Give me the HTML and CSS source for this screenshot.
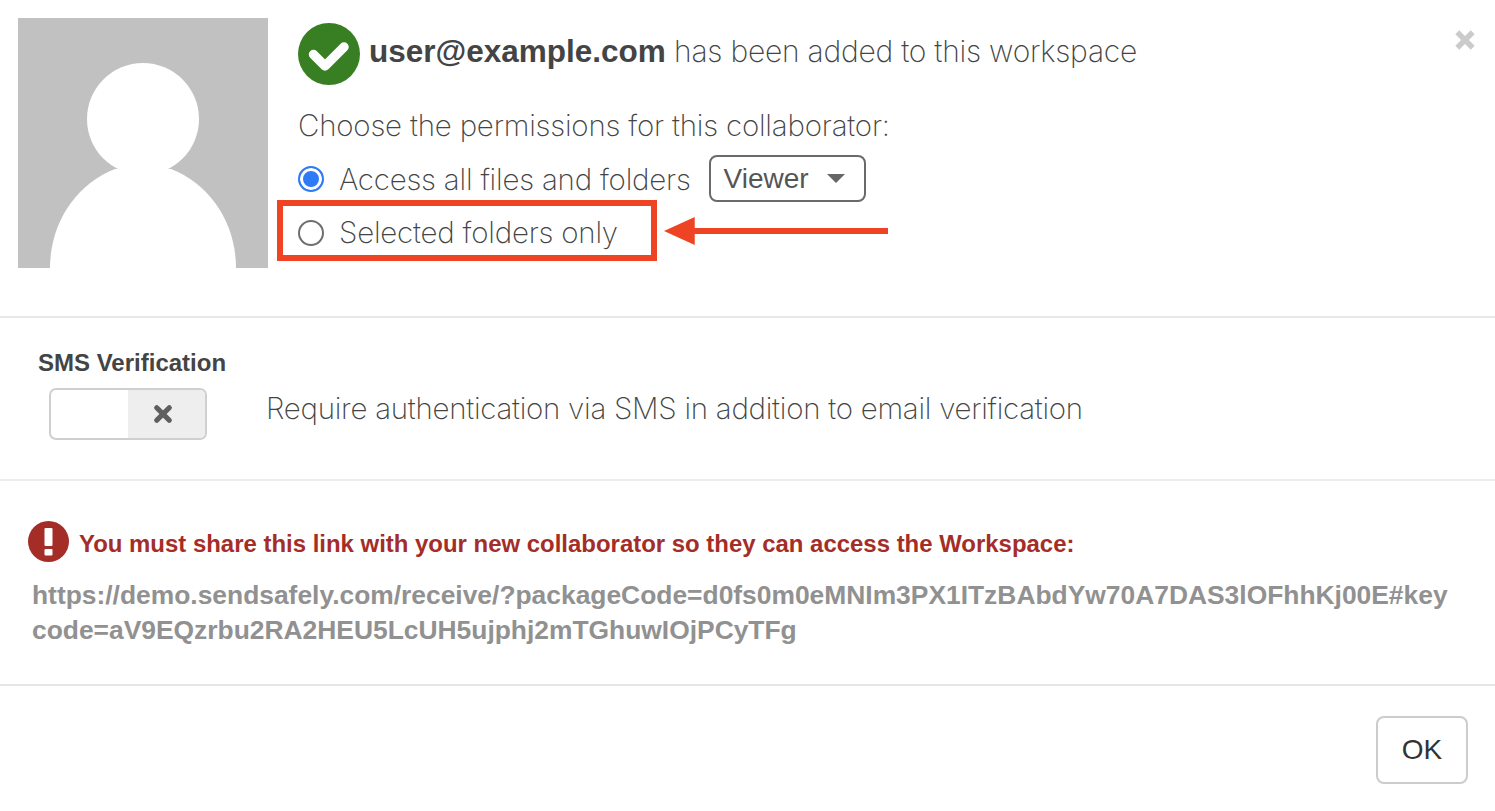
FILE: index.html
```html
<!DOCTYPE html>
<html lang="en">
<head>
<meta charset="utf-8">
<title>Collaborator added</title>
<link rel="stylesheet" href="styles.css">
</head>
<body>
<div class="modal">
  <section class="top">
    <svg class="avatar" viewBox="0 0 250 250" aria-hidden="true">
      <rect width="250" height="250" fill="#c1c1c1"/>
      <circle cx="125" cy="101" r="56" fill="#fff"/>
      <path d="M32 250C32 205 58 166 97 151H153C192 166 218 205 218 250Z" fill="#fff"/>
    </svg>
    <div class="info">
      <div class="headline">
        <svg class="check" viewBox="0 0 62 62" aria-hidden="true">
          <circle cx="31" cy="31" r="31" fill="#387e23"/>
          <path d="M15.500 31.500L27 43L46 24" fill="none" stroke="#fff" stroke-width="9.500" stroke-linecap="round" stroke-linejoin="round"/>
        </svg>
        <span class="headtext"><b>user@example.com</b> has been added to this workspace</span>
      </div>
      <p class="choose">Choose the permissions for this collaborator:</p>
      <div class="opt opt-all">
        <span class="radio on"></span>
        <span class="opt-label">Access all files and folders</span>
        <span class="select"><span class="select-label">Viewer</span><i class="caret"></i></span>
      </div>
      <div class="opt-line">
        <div class="opt highlighted">
          <span class="radio"></span>
          <span class="opt-label">Selected folders only</span>
        </div>
        <svg class="arrow" viewBox="0 0 226 30" aria-hidden="true">
          <path d="M0 15L31 1V12H226V18H31V29Z" fill="#ef4423"/>
        </svg>
      </div>
    </div>
    <svg class="close" viewBox="0 0 20 20" aria-hidden="true">
      <path d="M3 3L17 17M17 3L3 17" stroke="#cbcbcb" stroke-width="5"/>
    </svg>
  </section>
  <section class="sms">
    <div class="sms-left">
      <div class="sms-title">SMS Verification</div>
      <div class="toggle"><span class="toggle-off"></span><span class="toggle-x">
        <svg viewBox="0 0 16 16" aria-hidden="true"><path d="M3 3L13 13M13 3L3 13" stroke="#5f5f5f" stroke-width="4.200" stroke-linecap="round"/></svg>
      </span></div>
    </div>
    <div class="sms-text">Require authentication via SMS in addition to email verification</div>
  </section>
  <section class="link">
    <div class="warn">
      <svg class="warn-icon" viewBox="0 0 41 41" aria-hidden="true">
        <circle cx="20.500" cy="20.500" r="20.500" fill="#a52d27"/>
        <rect x="16.500" y="7" width="8" height="18" rx="1" fill="#fff"/>
        <rect x="16.500" y="28" width="8" height="6.500" rx="1" fill="#fff"/>
      </svg>
      <span class="warn-text">You must share this link with your new collaborator so they can access the Workspace:</span>
    </div>
    <div class="url">https://demo.sendsafely.com/receive/?packageCode=d0fs0m0eMNIm3PX1ITzBAbdYw70A7DAS3lOFhhKj00E#key<br>code=aV9EQzrbu2RA2HEU5LcUH5ujphj2mTGhuwIOjPCyTFg</div>
  </section>
  <footer class="foot">
    <button class="ok" type="button">OK</button>
  </footer>
</div>
</body>
</html>
```
FILE: styles.css
```css
* { box-sizing: border-box; }
html, body { margin: 0; padding: 0; background: #fff; }
body { width: 1495px; height: 811px; overflow: hidden; font-family: "Liberation Sans", Arial, sans-serif; color: #444; }
.modal { display: flex; flex-direction: column; height: 811px; }
.top { height: 318px; border-bottom: 2px solid #e8e8e8; display: flex; padding: 18px 0 0 18px; position: relative; }
.avatar { width: 250px; height: 250px; flex: none; }
.info { margin-left: 30px; display: flex; flex-direction: column; }
.headline { display: flex; align-items: flex-start; height: 62px; margin-top: 5px; gap: 9px; }
.check { width: 62px; height: 62px; flex: none; }
.headtext { font-family: Inter, sans-serif; font-weight: 200; font-size: 30px; letter-spacing: -.24px; line-height: 56px; color: #444; white-space: nowrap; }
.headtext b { font-family: "Liberation Sans", sans-serif; font-weight: 700; font-size: 31.5px; letter-spacing: 0; color: #444; }
.choose { font-family: Inter, sans-serif; font-weight: 200; font-size: 29.5px; letter-spacing: -.21px; color: #444; margin: 20px 0 0; line-height: 40px; white-space: nowrap; }
.opt { display: flex; align-items: center; font-family: Inter, sans-serif; font-weight: 200; font-size: 29.5px; letter-spacing: -.22px; color: #444; white-space: nowrap; }
.opt-label { padding-top: 2px; }
.opt-all { height: 48px; margin-top: 9px; }
.radio { width: 26px; height: 26px; border-radius: 50%; border: 2px solid #6e6e6e; margin: 2px 15px 0 0; flex: none; background: #fff; }
.radio.on { border-color: #2e7bf6; background: #2e7bf6; box-shadow: inset 0 0 0 3px #fff; }
.highlighted .radio { margin-top: 4px; }
.select { display: inline-flex; align-items: center; height: 47px; width: 157px; margin-left: 18px; padding-left: 13px; border: 2px solid #6a6a6a; border-radius: 8px; font-family: "Liberation Sans", sans-serif; font-weight: 400; font-size: 28px; letter-spacing: 0; color: #555; }
.select-label { padding-top: 1px; }
.caret { width: 0; height: 0; margin-left: 18px; border-left: 9px solid transparent; border-right: 9px solid transparent; border-top: 9px solid #666; }
.opt-line { display: flex; align-items: center; margin: -1px 0 0 -21px; }
.highlighted { width: 380px; height: 61px; margin-top: -1px; border: 6px solid #ef4423; padding-left: 15px; }
.arrow { width: 224px; height: 30px; margin-left: 7px; }
.close { position: absolute; top: 29px; right: 19px; width: 22px; height: 22px; }
.sms { height: 163px; border-bottom: 2px solid #ececec; display: flex; padding: 31px 0 0 38px; }
.sms-left { width: 228px; flex: none; }
.sms-title { font-weight: 700; font-size: 24px; line-height: 28px; color: #444; }
.toggle { display: flex; width: 158px; height: 52px; margin: 11px 0 0 11px; border: 2px solid #cfcfcf; border-radius: 7px; overflow: hidden; }
.toggle-off { width: 77px; }
.toggle-x { flex: 1; background: #eee; display: flex; align-items: center; justify-content: center; padding-right: 7px; }
.toggle-x svg { width: 20px; height: 20px; }
.sms-text { font-family: Inter, sans-serif; font-weight: 200; font-size: 29.5px; letter-spacing: -.27px; color: #444; margin-top: 41px; white-space: nowrap; }
.link { height: 205px; border-bottom: 2px solid #e6e6e6; padding: 40px 0 0 28px; }
.warn { display: flex; align-items: center; gap: 10px; font-weight: 700; font-size: 23.95px; color: #a52d27; white-space: nowrap; }
.warn-icon { width: 41px; height: 41px; flex: none; }
.warn-text { padding-top: 5px; }
.url { margin: 16px 0 0 4px; font-weight: 700; font-size: 26.4px; line-height: 35px; color: #919191; white-space: nowrap; }
.foot { flex: 1; display: flex; justify-content: flex-end; align-items: flex-start; padding: 30px 27px 0 0; }
.ok { width: 92px; height: 68px; background: #fff; border: 2px solid #ccc; border-radius: 8px; font-family: "Liberation Sans", sans-serif; font-size: 28px; color: #333; padding: 0; }
```
